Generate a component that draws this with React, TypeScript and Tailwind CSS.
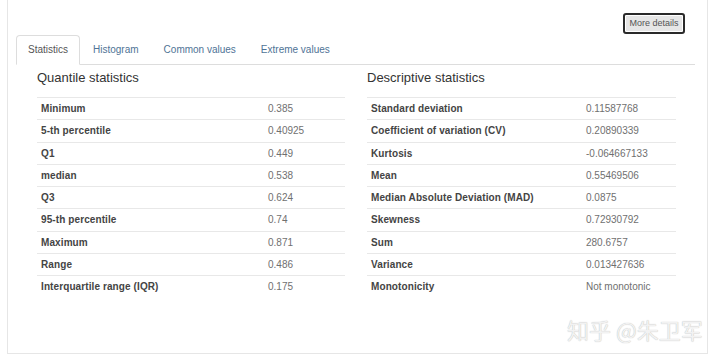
import React from 'react';

const quantile: [string, string][] = [
  ['Minimum', '0.385'],
  ['5-th percentile', '0.40925'],
  ['Q1', '0.449'],
  ['median', '0.538'],
  ['Q3', '0.624'],
  ['95-th percentile', '0.74'],
  ['Maximum', '0.871'],
  ['Range', '0.486'],
  ['Interquartile range (IQR)', '0.175'],
];

const descriptive: [string, string][] = [
  ['Standard deviation', '0.11587768'],
  ['Coefficient of variation (CV)', '0.20890339'],
  ['Kurtosis', '-0.064667133'],
  ['Mean', '0.55469506'],
  ['Median Absolute Deviation (MAD)', '0.0875'],
  ['Skewness', '0.72930792'],
  ['Sum', '280.6757'],
  ['Variance', '0.013427636'],
  ['Monotonicity', 'Not monotonic'],
];

const tabs = ['Statistics', 'Histogram', 'Common values', 'Extreme values'];

function StatTable({ title, rows, labelWidth }: { title: string; rows: [string, string][]; labelWidth: string }) {
  return (
    <div>
      <h3 className="h-[18px] text-[13px] leading-[18px] text-[#333]">{title}</h3>
      <div className="mt-[10px]">
        {rows.map(([label, value]) => (
          <div key={label} className="flex h-[22.25px] items-center border-t border-[#e8e8e8] text-[10px]">
            <div className={`${labelWidth} pl-[4px] font-bold tracking-[0.1px] text-[#444]`}>{label}</div>
            <div className="pl-[4px] text-[#707070]">{value}</div>
          </div>
        ))}
      </div>
    </div>
  );
}

export default function App() {
  return (
    <div className="relative h-[358px] w-[720px] overflow-hidden bg-white font-['Liberation_Sans',Arial,sans-serif]">
      <div className="ml-[7px] h-[354px] w-[701px] border-x border-b border-[#e6e6e6]">
        {/* More details button */}
        <div className="flex justify-end pr-[22px] pt-[13px]">
          <button className="h-[21px] w-[62px] rounded-[3px] border-2 border-[#2a2a2a] bg-[#e6e6e6] text-[9px] text-[#555] shadow-[inset_0_0_0_1px_#fff]">
            More details
          </button>
        </div>

        {/* Tabs */}
        <ul className="ml-[8px] mt-[1px] flex h-[30px] w-[679px] border-b border-[#ddd]">
          {tabs.map((t, i) => (
            <li
              key={t}
              className={
                i === 0
                  ? 'mb-[-1px] mr-[1px] flex h-[30px] items-center rounded-t-[4px] border border-[#ddd] border-b-white bg-white px-[11px] pb-[1px] text-[10px] text-[#555]'
                  : 'mb-[-1px] mr-[1px] flex h-[30px] items-center border border-transparent px-[11px] pb-[1px] text-[10px] text-[#4f7396]'
              }
            >
              {t}
            </li>
          ))}
        </ul>

        {/* Tab content */}
        <div className="mt-[4px] flex">
          <div className="ml-[29px] w-[308px]">
            <StatTable title="Quantile statistics" rows={quantile} labelWidth="w-[227px]" />
          </div>
          <div className="ml-[22px] w-[309px]">
            <StatTable title="Descriptive statistics" rows={descriptive} labelWidth="w-[215px]" />
          </div>
        </div>
      </div>

      {/* watermark */}
      <div className="absolute left-[567px] top-[314px] text-[22px] leading-[30px] text-[#f2f2f2] [text-shadow:0_0_1px_#b0b0b0] font-['Noto_Sans_CJK_SC','Noto_Sans',sans-serif]">
        知乎 @朱卫军
      </div>
    </div>
  );
}
